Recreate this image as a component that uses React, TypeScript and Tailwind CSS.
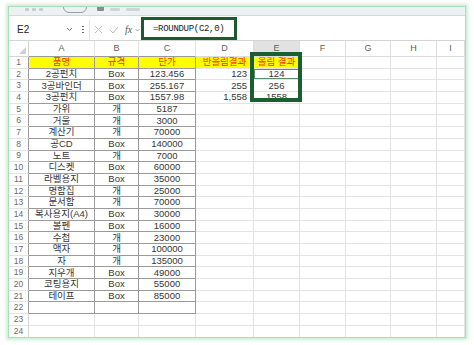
import React from 'react';

// 엑셀 ROUNDUP 예제 화면
const cols = [
  { key: 'A', w: 'w-[66px]' },
  { key: 'B', w: 'w-[44px]' },
  { key: 'C', w: 'w-[57px]' },
  { key: 'D', w: 'w-[58px]' },
  { key: 'E', w: 'w-[46px]' },
  { key: 'F', w: 'w-[46px]' },
  { key: 'G', w: 'w-[45px]' },
  { key: 'H', w: 'w-[46px]' },
  { key: 'I', w: 'flex-1' },
];

const data: string[][] = [
  ['품명', '규격', '단가', '반올림결과', '올림 결과'],
  ['2공펀치', 'Box', '123.456', '123', '124'],
  ['3공바인더', 'Box', '255.167', '255', '256'],
  ['3공펀치', 'Box', '1557.98', '1,558', '1558'],
  ['가위', '개', '5187'],
  ['거울', '개', '3000'],
  ['계산기', '개', '70000'],
  ['공CD', 'Box', '140000'],
  ['노트', '개', '7000'],
  ['디스켓', 'Box', '60000'],
  ['라벨용지', 'Box', '35000'],
  ['명함집', '개', '25000'],
  ['문서함', '개', '70000'],
  ['복사용지(A4)', 'Box', '30000'],
  ['볼펜', 'Box', '16000'],
  ['수첩', '개', '23000'],
  ['액자', '개', '100000'],
  ['자', '개', '135000'],
  ['지우개', 'Box', '49000'],
  ['코팅용지', 'Box', '55000'],
  ['테이프', 'Box', '85000'],
  [],
  [],
  [],
];

const Cell = ({ r, c, text }: { r: number; c: number; text?: string }) => {
  const inTable = c < 3 && r <= 22;
  const header = r === 1 && c < 5;
  const border = inTable ? 'border-[#9a9a9a]' : 'border-[#e3e3e3]';
  const align = c === 3 && r > 1 ? 'justify-end pr-[6px]' : 'justify-center';
  const active = r === 2 && c === 4 ? 'shadow-[inset_0_0_0_1px_#5b8a68]' : '';
  return (
    <div
      className={`${cols[c].w} shrink-0 h-full flex items-center ${align} border-r border-b ${border} ${
        header ? 'bg-[#ffff00] text-[#f53200]' : 'text-[#363636]'
      } ${active} overflow-hidden whitespace-nowrap`}
    >
      {text}
    </div>
  );
};

export default function App() {
  return (
    <div className="w-[474px] h-[345px] bg-white pt-[6px] pl-[8px] overflow-hidden">
      <div
        className="w-[458px] h-[332px] border border-[#a9dfb6] shadow-[0_0_3px_2px_#cdeed5] bg-white flex flex-col overflow-hidden"
        style={{ fontFamily: '"Liberation Sans", "Noto Sans CJK KR", sans-serif' }}
      >
        {/* 빠른 실행 도구 모음 (잘림) */}
        <div className="h-[9px] shrink-0 bg-[#eef1f4] border-b border-[#d6d8da] flex items-start gap-[6px] pl-[16px] overflow-hidden">
          <div className="flex gap-[3px] mt-[1px]">
            <div className="w-[4px] h-[3px] bg-[#c9cbcd] rounded-[1px]" />
            <div className="w-[4px] h-[3px] bg-[#c9cbcd] rounded-[1px]" />
            <div className="w-[4px] h-[3px] bg-[#c9cbcd] rounded-[1px]" />
          </div>
          <div className="w-[24px] h-[12px] -mt-[6px] ml-[14px] rounded-full border border-[#9a9c9e]" />
          <div className="w-[7px] h-[5px] -mt-[1px] ml-[4px] bg-[#8a8c8e] rounded-[1px]" />
          <div className="w-[10px] h-[3px] mt-[1px] bg-[#d2d4d6] rounded-[1px]" />
          <div className="w-[14px] h-[3px] mt-[1px] bg-[#d2d4d6] rounded-[1px]" />
        </div>

        {/* 수식 입력줄 */}
        <div className="h-[25px] shrink-0 flex items-center border-b border-[#d4d4d4] bg-white">
          <div className="w-[68px] h-[20px] flex items-center justify-between pl-[8px] pr-[4px] mt-[3px]">
            <span className="text-[10px] text-[#222]">E2</span>
            <svg width="7" height="5" viewBox="0 0 7 5">
              <path d="M1 1 L3.5 3.5 L6 1" stroke="#777" strokeWidth="1" fill="none" />
            </svg>
          </div>
          <div className="w-[12px] flex flex-col items-center gap-[1.5px] mt-[3px]">
            <div className="w-[1.5px] h-[1.5px] bg-[#666]" />
            <div className="w-[1.5px] h-[1.5px] bg-[#666]" />
            <div className="w-[1.5px] h-[1.5px] bg-[#666]" />
          </div>
          <div className="w-[52px] h-[20px] flex items-center gap-[6px] pl-[4px] mt-[3px] border-l border-[#e6e6e6]">
            <svg width="9" height="9" viewBox="0 0 9 9">
              <path d="M1 1 L8 8 M8 1 L1 8" stroke="#b5b5b5" strokeWidth="0.9" />
            </svg>
            <svg width="10" height="8" viewBox="0 0 10 8">
              <path d="M1 4 L4 7 L9 1" stroke="#b5b5b5" strokeWidth="0.9" fill="none" />
            </svg>
            <span className="text-[10px] italic text-[#555] leading-none" style={{ fontFamily: '"Liberation Serif", serif' }}>
              fx
            </span>
            <svg width="5" height="4" viewBox="0 0 5 4" className="-ml-[3px]">
              <path d="M0.5 1 L2.5 3 L4.5 1" stroke="#999" strokeWidth="0.8" fill="none" />
            </svg>
          </div>
          <div className="w-[96px] h-[23px] border-[3px] border-[#1e5a30] flex items-center pl-[9px] mt-[1px]">
            <span
              className="text-[9px] text-[#222] tracking-[-0.3px] mt-[2px]"
              style={{ fontFamily: '"Liberation Mono", monospace' }}
            >
              =ROUNDUP(C2,0)
            </span>
          </div>
        </div>

        {/* 시트 */}
        <div className="relative flex-1 text-[9.5px]">
          <div className="h-[16px] flex">
            <div className="w-[20px] shrink-0 h-full border-r border-b border-[#d4d4d4] flex items-end justify-end p-[2px]">
              <svg width="7" height="7" viewBox="0 0 7 7">
                <path d="M7 0 L7 7 L0 7 Z" fill="#d0d0d0" />
              </svg>
            </div>
            {cols.map((c, i) => (
              <div
                key={c.key}
                className={`${c.w} shrink-0 h-full flex items-center justify-center border-r border-b text-[9px] text-[#5e5e5e] ${
                  i < 3 ? 'border-b-[#9a9a9a] border-r-[#e3e3e3]' : 'border-[#dcdcdc]'
                } ${c.key === 'E' ? 'bg-[#e2e2e2]' : ''}`}
              >
                {c.key}
              </div>
            ))}
          </div>

          {data.map((row, ri) => {
            const r = ri + 1;
            return (
              <div key={r} className="h-[11.7px] flex">
                <div
                  className={`w-[20px] shrink-0 h-full flex items-center justify-center text-[8.5px] text-[#6a6a6a] border-b border-[#e3e3e3] border-r ${
                    r <= 22 ? 'border-r-[#9a9a9a]' : 'border-r-[#d4d4d4]'
                  }`}
                >
                  {r}
                </div>
                {cols.map((c, ci) => (
                  <Cell key={c.key} r={r} c={ci} text={row[ci]} />
                ))}
              </div>
            );
          })}

          {/* 강조 표시 상자 */}
          <div className="absolute left-[241px] top-[11px] w-[52px] h-[50px] border-[4px] border-[#1b5e30] pointer-events-none" />
        </div>
      </div>
    </div>
  );
}
